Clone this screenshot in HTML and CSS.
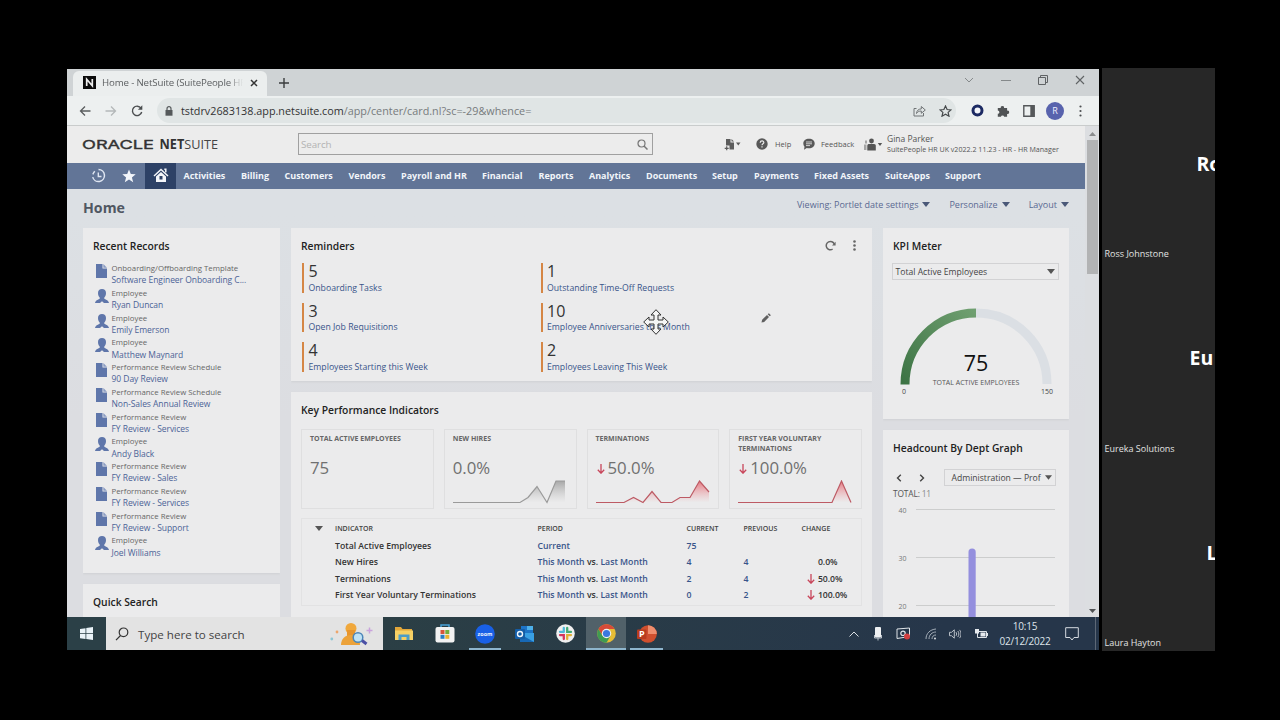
FILE: index.html
```html
<!DOCTYPE html>
<html lang="en">
<head>
<meta charset="utf-8">
<title>Home - NetSuite (SuitePeople HR)</title>
<link rel="stylesheet" href="styles.css">
</head>
<body>
<svg class="defs" width="0" height="0">
  <defs>
    <symbol id="doc" viewBox="0 0 11 14"><path d="M0 0h6.500v4.500H11V14H0z" fill="#5f76aa"/><path d="M7.300 0L11 3.700H7.300z" fill="#8a9bc2"/></symbol>
    <symbol id="person" viewBox="0 0 14 14"><path d="M7 0c2.500 0 4 1.600 4 3.900 0 1.900-.8 3.700-1.700 4.600v1.200c.9.900 4.200 1.200 4.700 4.300H9L7 12.300 5 14H0c.5-3.100 3.800-3.400 4.700-4.300V8.500C3.800 7.600 3 5.800 3 3.900 3 1.600 4.500 0 7 0z" fill="#5f76aa"/></symbol>
    <symbol id="down" viewBox="0 0 8 5"><path d="M0 0h8L4 5z" fill="currentColor"/></symbol>
    <symbol id="fall" viewBox="0 0 8 10"><path d="M4 0v9M.8 5.800L4 9.200l3.200-3.400" fill="none" stroke="#c8455a" stroke-width="1.300"/></symbol>
    <linearGradient id="gRed" x1="0" y1="0" x2="0" y2="1"><stop offset="0" stop-color="#e5626c" stop-opacity=".85"/><stop offset="1" stop-color="#ee9aa0" stop-opacity="0"/></linearGradient>
    <linearGradient id="gGray" x1="0" y1="0" x2="0" y2="1"><stop offset="0" stop-color="#a0a0a0" stop-opacity=".9"/><stop offset="1" stop-color="#c0c0c0" stop-opacity="0"/></linearGradient>
    <linearGradient id="gGreen" x1="0" y1="1" x2="1" y2="0"><stop offset="0" stop-color="#3c7344"/><stop offset="1" stop-color="#6f9f70"/></linearGradient>
  </defs>
</svg>

<div class="stage">
  <main class="desktop">
    <div class="tabstrip">
      <div class="tab">
        <svg width="13" height="13" viewBox="0 0 13 13"><rect width="13" height="13" fill="#0b0b0b"/><path d="M3.700 10V3.300L9.300 9.700V3" fill="none" stroke="#eee" stroke-width="1.700"/></svg>
        <span class="tab-title">Home - NetSuite (SuitePeople HR</span>
        <svg width="8" height="8" viewBox="0 0 8 8"><path d="M1 1l6 6M7 1L1 7" stroke="#333" stroke-width="1.500"/></svg>
      </div>
      <svg class="newtab" width="10" height="10" viewBox="0 0 10 10"><path d="M5 0v10M0 5h10" stroke="#3a3d3e" stroke-width="1.400"/></svg>
      <div class="winbtns">
        <svg width="10" height="10" viewBox="0 0 10 10"><path d="M1 3l4 4 4-4" fill="none" stroke="#85898b"/></svg>
        <svg width="10" height="10" viewBox="0 0 10 10"><path d="M0 5.500h10" stroke="#85898b"/></svg>
        <svg width="10" height="10" viewBox="0 0 10 10"><path d="M.5 2.500h7v7h-7zM2.500 2.500v-2h7v7h-2" fill="none" stroke="#606365" stroke-width="1"/></svg>
        <svg width="10" height="10" viewBox="0 0 10 10"><path d="M1 1l8 8M9 1L1 9" stroke="#606365" stroke-width="1.100"/></svg>
      </div>
    </div>

    <div class="toolbar">
      <div class="navbtns">
        <svg width="12" height="12" viewBox="0 0 12 12"><path d="M11.500 6H1.500M6 1.500L1.500 6 6 10.500" fill="none" stroke="#5a5d5f" stroke-width="1.300"/></svg>
        <svg width="12" height="12" viewBox="0 0 12 12"><path d="M.5 6h10M6 1.500L10.500 6 6 10.500" fill="none" stroke="#b4b8b9" stroke-width="1.300"/></svg>
        <svg width="12" height="12" viewBox="0 0 12 12"><path d="M10 3.200A4.700 4.700 0 1 0 10.700 7" fill="none" stroke="#4b4e50" stroke-width="1.400"/><path d="M11.300.3v4.400H6.900z" fill="#4b4e50"/></svg>
      </div>
      <div class="omnibox">
        <svg class="lock" width="8" height="10" viewBox="0 0 8 10"><path d="M.5 4h7v5.700h-7z" fill="#54585a"/><path d="M2 4V2.700a2 2 0 0 1 4 0V4" fill="none" stroke="#54585a" stroke-width="1.200"/></svg>
        <span class="url"><b>tstdrv2683138.app.netsuite.com</b>/app/center/card.nl?sc=-29&amp;whence=</span>
        <svg class="share" width="13" height="12" viewBox="0 0 13 12"><path d="M3.500 3.500H1v7.500h9.500V8" fill="none" stroke="#707476"/><path d="M3.500 8.500c.3-3 2-4.500 4.800-4.600V1.500L12.300 5 8.300 8.300V6c-2.300 0-3.700.8-4.800 2.500z" fill="none" stroke="#707476"/></svg>
        <svg width="13" height="12" viewBox="0 0 13 12"><path d="M6.500 1l1.600 3.500 3.900.4-2.900 2.500.9 3.800-3.500-2-3.500 2 .9-3.800L1 4.900l3.900-.4z" fill="none" stroke="#45494b" stroke-width="1.200"/></svg>
      </div>
      <div class="exts">
        <svg width="13" height="13" viewBox="0 0 13 13"><circle cx="6.500" cy="6.500" r="4.500" fill="#f3f5fa" stroke="#1c2a63" stroke-width="3"/></svg>
        <svg width="13" height="12" viewBox="0 0 13 12"><path d="M.8 3h3a1.700 1.700 0 1 1 3.300 0h3v2.700a1.700 1.700 0 1 1 0 3.300v2.700H7.200a1.700 1.700 0 0 0-3.300 0H.8V8.800a1.600 1.600 0 0 0 0-3.200z" fill="#505355"/></svg>
        <svg width="12" height="12" viewBox="0 0 12 12"><path d="M.8.800h10.400v10.400H.8z" fill="none" stroke="#55585a" stroke-width="1.400"/><path d="M7.300 1h4v10h-4z" fill="#55585a"/></svg>
        <span class="avatar">R</span>
        <svg width="3" height="12" viewBox="0 0 3 12"><circle cx="1.500" cy="1.500" r="1.100" fill="#4c4f51"/><circle cx="1.500" cy="6" r="1.100" fill="#4c4f51"/><circle cx="1.500" cy="10.500" r="1.100" fill="#4c4f51"/></svg>
      </div>
    </div>

    <div class="viewport">
      <div class="page">
        <header class="ns-header">
          <svg class="logo" width="140" height="16" viewBox="0 0 140 16">
            <text class="logo-oracle" x="0" y="12.500" textLength="72" lengthAdjust="spacingAndGlyphs">ORACLE</text>
            <text class="logo-ns" x="77.500" y="12.800" textLength="58.500" lengthAdjust="spacingAndGlyphs"><tspan class="logo-net">NET</tspan>SUITE</text>
          </svg>
          <div class="search"><span>Search</span>
            <svg width="11" height="11" viewBox="0 0 11 11"><circle cx="4.500" cy="4.500" r="3.500" fill="none" stroke="#777" stroke-width="1.200"/><path d="M7 7l3.500 3.500" stroke="#777" stroke-width="1.500"/></svg>
          </div>
          <div class="tools">
            <svg class="t-new" width="17" height="13" viewBox="0 0 17 13"><path d="M2 1h4.500v3.500H10V11.500H5.500V7.500H2z" fill="#5c5c5c"/><path d="M7.500 1L10 3.500H7.500z" fill="#5c5c5c"/><path d="M2.700 8.300v4M.7 10.300h4" stroke="#5c5c5c" stroke-width="1.200"/><path d="M12 4.500h4.500l-2.200 3z" fill="#5c5c5c"/></svg>
            <svg class="t-help" width="12" height="12" viewBox="0 0 12 12"><circle cx="6" cy="6" r="5.700" fill="#585858"/><path d="M4.200 4.700C4.300 2.300 8 2.500 7.800 4.600 7.700 5.700 6 5.800 6 7.200M6 8.200v1.400" fill="none" stroke="#ececec" stroke-width="1.200"/></svg>
            <span class="t-helptext">Help</span>
            <svg class="t-feed" width="12" height="12" viewBox="0 0 12 12"><path d="M6 .7c3.300 0 5.700 2 5.700 4.800S9.300 10.300 6 10.300c-.8 0-1.500-.1-2.200-.3L1 11.700l.5-3C.7 7.900.3 6.800.3 5.500.3 2.700 2.700.7 6 .7z" fill="#585858"/><path d="M3 4h6M3 5.800h6M3 7.600h4" stroke="#ececec" stroke-width=".8"/></svg>
            <span class="t-feedtext">Feedback</span>
            <svg class="t-role" width="20" height="13" viewBox="0 0 20 13"><path d="M1 12V6.500h2.500V12zM2 2.500h2v3H2z" fill="#a5a5a5"/><circle cx="8.500" cy="3" r="2.400" fill="#555"/><path d="M4.300 12.500V7.700C4.300 6.400 5 5.900 6 5.900h5c1.200 0 1.800.7 1.800 1.800v4.800z" fill="#555"/><path d="M14.800 5h4.400L17 8z" fill="#555"/></svg>
            <div class="user"><div class="user-name">Gina Parker</div><div class="user-role">SuitePeople HR UK v2022.2 11.23 - HR - HR Manager</div></div>
          </div>
        </header>

        <nav class="menu">
          <span class="mi"><svg width="15" height="15" viewBox="0 0 15 15"><path d="M7.500 1.500a6 6 0 1 1-5.800 7.600" fill="none" stroke="#dfe6f2" stroke-width="1.500"/><path d="M7.300 4.500v4h3.200M1.800 6.300l1-1.800 1-1.200" fill="none" stroke="#dfe6f2" stroke-width="1.400"/></svg></span>
          <span class="mi"><svg width="14" height="14" viewBox="0 0 14 14"><path d="M7 .5l1.800 4.600 4.900.2-3.800 3.100 1.300 4.800L7 10.500l-4.200 2.700 1.300-4.800L.3 5.300l4.900-.2z" fill="#f2f5fa"/></svg></span>
          <span class="mi on"><svg width="16" height="15" viewBox="0 0 16 15"><path d="M1 8l7-6.500L15 8M11.300 1.300h1.500v3" fill="none" stroke="#f4f6fa" stroke-width="1.500"/><path d="M3 8.600l5-4.600 5 4.600V14H3z" fill="#f4f6fa"/><path d="M6.500 8h3v3.500h-3z" fill="#2d4166"/></svg></span>
          <a>Activities</a><a>Billing</a><a>Customers</a><a>Vendors</a><a>Payroll and HR</a><a>Financial</a><a>Reports</a><a>Analytics</a><a>Documents</a><a>Setup</a><a>Payments</a><a>Fixed Assets</a><a>SuiteApps</a><a>Support</a>
        </nav>

        <div class="titlebar">
          <h1>Home</h1>
          <div class="opts">
            <span class="o1">Viewing: Portlet date settings</span><svg width="8" height="5"><use href="#down"/></svg>
            <span class="o2">Personalize</span><svg width="8" height="5"><use href="#down"/></svg>
            <span class="o3">Layout</span><svg width="8" height="5"><use href="#down"/></svg>
          </div>
        </div>

        <div class="columns">
          <div class="col">
            <section class="card recent">
              <h2>Recent Records</h2>
              <ul>
                <li><svg class="ic"><use href="#doc"/></svg><div><p>Onboarding/Offboarding Template</p><a>Software Engineer Onboarding C...</a></div></li>
                <li><svg class="ip"><use href="#person"/></svg><div><p>Employee</p><a>Ryan Duncan</a></div></li>
                <li><svg class="ip"><use href="#person"/></svg><div><p>Employee</p><a>Emily Emerson</a></div></li>
                <li><svg class="ip"><use href="#person"/></svg><div><p>Employee</p><a>Matthew Maynard</a></div></li>
                <li><svg class="ic"><use href="#doc"/></svg><div><p>Performance Review Schedule</p><a>90 Day Review</a></div></li>
                <li><svg class="ic"><use href="#doc"/></svg><div><p>Performance Review Schedule</p><a>Non-Sales Annual Review</a></div></li>
                <li><svg class="ic"><use href="#doc"/></svg><div><p>Performance Review</p><a>FY Review - Services</a></div></li>
                <li><svg class="ip"><use href="#person"/></svg><div><p>Employee</p><a>Andy Black</a></div></li>
                <li><svg class="ic"><use href="#doc"/></svg><div><p>Performance Review</p><a>FY Review - Sales</a></div></li>
                <li><svg class="ic"><use href="#doc"/></svg><div><p>Performance Review</p><a>FY Review - Services</a></div></li>
                <li><svg class="ic"><use href="#doc"/></svg><div><p>Performance Review</p><a>FY Review - Support</a></div></li>
                <li><svg class="ip"><use href="#person"/></svg><div><p>Employee</p><a>Joel Williams</a></div></li>
              </ul>
            </section>
            <section class="card rest"><h2>Quick Search</h2></section>
          </div>

          <div class="col">
            <section class="card reminders">
              <div class="head"><h2>Reminders</h2>
                <svg width="11" height="11" viewBox="0 0 11 11"><path d="M9.300 4A4.200 4.200 0 1 0 7.600 9.200" fill="none" stroke="#666" stroke-width="1.500"/><path d="M10.600 1.800v3.700H7z" fill="#666"/></svg>
                <svg width="3" height="11" viewBox="0 0 3 11"><circle cx="1.500" cy="1.500" r="1.300" fill="#666"/><circle cx="1.500" cy="5.500" r="1.300" fill="#666"/><circle cx="1.500" cy="9.500" r="1.300" fill="#666"/></svg>
              </div>
              <div class="remrow">
                <div class="remgrid">
                  <div class="rem"><b>5</b><a>Onboarding Tasks</a></div><div class="rem"><b>1</b><a>Outstanding Time-Off Requests</a></div>
                  <div class="rem"><b>3</b><a>Open Job Requisitions</a></div><div class="rem"><b>10</b><a>Employee Anniversaries this Month</a></div>
                  <div class="rem"><b>4</b><a>Employees Starting this Week</a></div><div class="rem"><b>2</b><a>Employees Leaving This Week</a></div>
                </div>
                <svg class="pencil" width="10" height="10" viewBox="0 0 10 10"><path d="M.5 9.500l.6-2.700L6 2l2 2-4.800 4.900zM6.700 1.300L7.900.200l2 2-1.200 1.100z" fill="#606060"/></svg>
              </div>
            </section>
            <section class="card kpi rest">
              <h2>Key Performance Indicators</h2>
              <div class="tiles">
                <div class="tile"><h3>TOTAL ACTIVE EMPLOYEES</h3><div class="val">75</div></div>
                <div class="tile"><h3>NEW HIRES</h3><div class="val">0.0%</div>
                  <svg width="114" height="24"><path d="M67 22.500l8-5 9-11 10 16 9-21.500h9v21.500z" fill="url(#gGray)"/><path d="M0 22.500h67l8-5 9-11 10 16 9-21.500h9" fill="none" stroke="#9a9a9a" stroke-width="1.200"/></svg></div>
                <div class="tile"><h3>TERMINATIONS</h3><div class="val"><svg width="8" height="10"><use href="#fall"/></svg>50.0%</div>
                  <svg width="114" height="24"><path d="M28 22.500l9.500-5 9.500 5 9-11 9 11h11l8-5h10L103.500 1l9.500 11v10.500z" fill="url(#gRed)"/><path d="M0 22.500h28l9.500-5 9.500 5 9-11 9 11h11l8-5h10L103.500 1l9.500 11" fill="none" stroke="#bd5a64" stroke-width="1.200"/></svg></div>
                <div class="tile"><h3>FIRST YEAR VOLUNTARY TERMINATIONS</h3><div class="val"><svg width="8" height="10"><use href="#fall"/></svg>100.0%</div>
                  <svg width="114" height="24"><path d="M94 22.500L103.500 1l9.500 21.500z" fill="url(#gRed)"/><path d="M0 22.500h94L103.500 1l9.500 21.500" fill="none" stroke="#bd5a64" stroke-width="1.200"/></svg></div>
              </div>
              <div class="table">
                <div class="tr th"><svg width="8" height="5"><use href="#down"/></svg><span>INDICATOR</span><span>PERIOD</span><span>CURRENT</span><span>PREVIOUS</span><span>CHANGE</span></div>
                <div class="tr"><i></i><span>Total Active Employees</span><a>Current</a><a>75</a><i></i><i></i></div>
                <div class="tr"><i></i><span>New Hires</span><span><a>This Month</a> vs. <a>Last Month</a></span><a>4</a><a>4</a><span class="chg">0.0%</span></div>
                <div class="tr"><i></i><span>Terminations</span><span><a>This Month</a> vs. <a>Last Month</a></span><a>2</a><a>4</a><span class="chg"><svg width="8" height="10"><use href="#fall"/></svg>50.0%</span></div>
                <div class="tr"><i></i><span>First Year Voluntary Terminations</span><span><a>This Month</a> vs. <a>Last Month</a></span><a>0</a><a>2</a><span class="chg"><svg width="8" height="10"><use href="#fall"/></svg>100.0%</span></div>
              </div>
            </section>
          </div>

          <div class="col">
            <section class="card meter">
              <h2>KPI Meter</h2>
              <div class="select"><span>Total Active Employees</span><svg width="8" height="5"><use href="#down"/></svg></div>
              <svg class="gauge" width="186" height="110" viewBox="0 0 186 110">
                <path d="M93 34a71 71 0 0 1 71 71" fill="none" stroke="#dbdfe4" stroke-width="9"/>
                <path d="M22 105.500a71 71.500 0 0 1 71-71.500" fill="none" stroke="url(#gGreen)" stroke-width="9"/>
                <text class="g-val" x="93" y="91.500">75</text>
                <text class="g-lab" x="93" y="105.500">TOTAL ACTIVE EMPLOYEES</text>
              </svg>
              <div class="ends"><span>0</span><span>150</span></div>
            </section>
            <section class="card head-graph rest">
              <h2>Headcount By Dept Graph</h2>
              <div class="pick">
                <svg width="6" height="8" viewBox="0 0 6 8"><path d="M4.800.7L1.500 4l3.300 3.300" fill="none" stroke="#444" stroke-width="1.400"/></svg>
                <svg width="6" height="8" viewBox="0 0 6 8"><path d="M1.200.7L4.500 4 1.200 7.300" fill="none" stroke="#444" stroke-width="1.400"/></svg>
                <div class="select"><span>Administration — Prof</span><svg width="7" height="5"><use href="#down"/></svg></div>
              </div>
              <div class="total">TOTAL: <span>11</span></div>
              <svg class="bars" width="186" height="120">
                <path d="M33 9.500h139M33 57.500h139M33 105.500h139" stroke="#cccdcd"/>
                <path d="M85.500 120V52a3.600 3.600 0 0 1 7.200 0V120z" fill="#948fde"/>
                <text class="ax" x="23.500" y="12.500">40</text><text class="ax" x="23.500" y="60.500">30</text><text class="ax" x="23.500" y="108.500">20</text>
              </svg>
            </section>
          </div>
        </div>
      </div>
      <div class="scroll">
        <svg width="7" height="4"><path d="M0 4L3.500 0 7 4z" fill="#8a8c8e"/></svg>
        <div class="thumb"></div>
        <svg width="7" height="4"><path d="M0 0h7L3.500 4z" fill="#505254"/></svg>
      </div>
      <svg class="cursor" width="26" height="26" viewBox="0 0 26 26"><path d="M13 .7l5 5.300h-3v5h5V8l5.300 5-5.300 5v-3h-5v5h3l-5 5.300L8 20h3v-5H6v3L.7 13 6 8v3h5V6H8z" fill="#f5f5f5" stroke="#333" stroke-width="1"/></svg>
    </div>

    <div class="taskbar">
      <div class="start"><svg width="13" height="13" viewBox="0 0 13 13"><path d="M0 2l5.500-.8v5H0zM6.300 1L13 0v6.200H6.300zM0 7h5.500v5L0 11.200zM6.300 7H13v6l-6.700-.9z" fill="#e9f3f8"/></svg></div>
      <div class="tsearch">
        <svg width="14" height="14" viewBox="0 0 14 14"><circle cx="8.500" cy="5.300" r="4.300" fill="none" stroke="#333" stroke-width="1.200"/><path d="M5.500 8.500L1 13.200" stroke="#333" stroke-width="1.200"/></svg>
        <span>Type here to search</span>
        <svg class="hl" width="44" height="24" viewBox="0 0 44 24"><circle cx="21" cy="6.500" r="5.500" fill="#f0a83c"/><path d="M17 8h8v6h-8z" fill="#e8962e"/><path d="M11 23c0-6 4-10 10-10s9 4 9 10z" fill="#eca23a"/><circle cx="28" cy="15.500" r="4.800" fill="#bfe2f5" stroke="#4c86b8" stroke-width="1.500"/><path d="M32 18.500l4.500 3.500" stroke="#4a4fa5" stroke-width="3"/><path d="M39.500 5.500v6M36.500 8.500h6" stroke="#c9a3dc" stroke-width="1.500"/><circle cx="7" cy="10" r="1.400" fill="#eda66c"/><circle cx="1.800" cy="17" r="1.400" fill="#8cc6d5"/></svg>
      </div>
      <div class="apps">
        <span class="app"><svg width="18" height="15" viewBox="0 0 18 15"><path d="M0 1h6l1.500 2H17v11H0z" fill="#e2a73a"/><path d="M0 4.500h18V14H0z" fill="#f6d064"/><path d="M3.500 14V8.500h11V14h-3v-3h-5v3z" fill="#4b9cc9"/></svg></span>
        <span class="app"><svg width="20" height="19" viewBox="0 0 20 19"><path d="M6 4V1h8v3" fill="none" stroke="#4aa3d8" stroke-width="1.500"/><rect x=".5" y="3" width="19" height="15.500" rx="2" fill="#f2f2f2"/><path d="M5.500 6h4v4h-4z" fill="#d8553a"/><path d="M10.300 6h4v4h-4z" fill="#74ae3c"/><path d="M5.500 10.800h4v4h-4z" fill="#2c7dc4"/><path d="M10.300 10.800h4v4h-4z" fill="#edb22f"/></svg></span>
        <span class="app run"><svg width="20" height="20" viewBox="0 0 20 20"><circle cx="10" cy="10" r="9.800" fill="#1960e6"/><text class="zm" x="10" y="11.700">zoom</text></svg></span>
        <span class="app"><svg width="20" height="18" viewBox="0 0 20 18"><path d="M6 1h12v8H6z" fill="#1d74c7"/><path d="M12 1h6v4h-6z" fill="#4db0ea"/><path d="M5 8h14v9H5z" fill="#39a0e4"/><path d="M5 9l14 8H5z" fill="#1768b5"/><rect y="4" width="10" height="10" rx="1" fill="#145da6"/><circle cx="5" cy="9" r="2.500" fill="none" stroke="#f0f6fa" stroke-width="1.400"/></svg></span>
        <span class="app"><svg width="19" height="19" viewBox="0 0 19 19"><circle cx="9.500" cy="9.500" r="9.300" fill="#f0f0f0"/><g fill="none" stroke-width="2.300" stroke-linecap="round"><path d="M7.800 4v4M4 7.800h3.800" stroke="#4fb8dc"/><path d="M11.200 4v3.900h3.800" stroke="#45ac78"/><path d="M11.200 15v-3.900H15" stroke="#e1af38"/><path d="M7.800 15v-3.900H4" stroke="#d4345f"/></g></svg></span>
        <span class="app active run"><svg width="19" height="19" viewBox="0 0 19 19"><circle cx="9.500" cy="9.500" r="9.300" fill="#e8bd35"/><path d="M1.400 4.900A9.300 9.300 0 0 1 17.600 4.900H9.500L5.500 11.800z" fill="#d84a38"/><path d="M1.400 4.900A9.300 9.300 0 0 0 9.500 18.800l4-7H5.500z" fill="#3f9b52"/><circle cx="9.500" cy="9.500" r="4.700" fill="#f2f2f2"/><circle cx="9.500" cy="9.500" r="3.600" fill="#3b78df"/></svg></span>
        <span class="app run"><svg width="20" height="18" viewBox="0 0 20 18"><circle cx="11" cy="9" r="8.800" fill="#cf4f2e"/><path d="M11 .2a8.800 8.800 0 0 1 8.800 8.800H11z" fill="#ee8d6d"/><rect y="4.500" width="9.500" height="9.500" rx="1" fill="#b93c1e"/><text class="pp" x="4.800" y="12.200">P</text></svg></span>
      </div>
      <div class="tray">
        <svg class="caret" width="10" height="6" viewBox="0 0 10 6"><path d="M.5 5.500L5 1l4.500 4.500" fill="none" stroke="#dbe0e5"/></svg>
        <svg width="8" height="14" viewBox="0 0 8 14"><rect x="1" y="0" width="6" height="10.500" rx="1" fill="#eef0f2"/><path d="M.5 8v3h7V8M4 11v2.500" fill="none" stroke="#bac2ca"/></svg>
        <svg width="15" height="13" viewBox="0 0 15 13"><path d="M1 2l12.500-1v8.500L1 11.500z" fill="none" stroke="#dfe4e8"/><circle cx="7" cy="6.300" r="2.200" fill="none" stroke="#e2e6ea" stroke-width="1.200"/><circle cx="11" cy="9.500" r="3" fill="#d33f3f"/></svg>
        <svg width="12" height="12" viewBox="0 0 12 12"><path d="M1 11C1 5.500 5 1.500 11 1M4 11c0-4 3-7 7-7M7 11c0-2.500 1.500-4 4-4" fill="none" stroke="#a3adb8"/><circle cx="10" cy="10.500" r="1" fill="#dce1e5"/></svg>
        <svg class="sound" width="12" height="10" viewBox="0 0 12 10"><path d="M.5 3.300h2L5.300.8v8.400L2.500 6.700h-2zM7 3.200c.8 1 .8 2.600 0 3.600M8.800 2c1.400 1.700 1.400 4.300 0 6M10.500.9c2 2.300 2 5.900 0 8.200" fill="none" stroke="#c7cdd4" stroke-width=".9"/></svg>
        <svg width="13" height="10" viewBox="0 0 13 10"><path d="M2.500 2.500h9v6h-9z" fill="none" stroke="#dfe4e8"/><path d="M5.500 3.500h5v4h-5zM0 0h4v4.500H0z" fill="#e6eaee"/><path d="M12.500 4v3" stroke="#dfe4e8"/></svg>
        <div class="clock"><div>10:15</div><div>02/12/2022</div></div>
        <svg class="note" width="14" height="14" viewBox="0 0 14 14"><path d="M.7.700h12.600v9.800H9L7 13l-2-2.500H.7z" fill="none" stroke="#d5dae0"/></svg>
      </div>
      <div class="peek"></div>
    </div>
  </main>

  <aside class="people">
    <div class="tilep"><b>Ro</b><span>Ross Johnstone</span></div>
    <div class="tilep p2"><b>Eu</b><span>Eureka Solutions</span></div>
    <div class="tilep p3"><b>L</b><span>Laura Hayton</span></div>
  </aside>
</div>
</body>
</html>
```
FILE: styles.css
```css
* { box-sizing: border-box; margin: 0; padding: 0; }
html, body { width: 1280px; height: 720px; overflow: hidden; background: #000; }
body { font-family: "Open Sans", "Noto Sans", sans-serif; font-size: 9px; color: #333; }
svg { display: block; flex: none; }
.defs { position: absolute; }
ul { list-style: none; }
i { font-style: normal; }
.stage { display: flex; align-items: flex-start; padding: 68px 65px 0 67px; width: 1280px; height: 720px; }
.desktop { width: 1032px; height: 581px; margin-top: 1px; display: flex; flex-direction: column; overflow: hidden; background: linear-gradient(#dce0e4 25%, #dcdde1 60%); }

.tabstrip { height: 27px; display: flex; align-items: center; background: #cfd3d5; padding-left: 6px; flex: none; }
.tab { width: 194px; height: 25px; align-self: flex-end; background: #ebeeee; border-radius: 6px 6px 0 0; display: flex; align-items: center; padding: 0 0 2px 10px; }
.tab-title { width: 141px; margin: 0 7px 0 6px; white-space: nowrap; overflow: hidden; font-size: 9.700px; line-height: 16px; letter-spacing: -.15px; color: #5c5f61; -webkit-mask-image: linear-gradient(90deg, #000 90%, transparent); mask-image: linear-gradient(90deg, #000 90%, transparent); }
.newtab { margin-left: 12px; }
.winbtns { margin: -5px 14px 0 auto; display: flex; gap: 27px; }

.toolbar { height: 30px; flex: none; display: flex; align-items: center; background: #edf0f0; border-bottom: 1px solid #c9cccc; }
.navbtns { display: flex; gap: 14px; padding-left: 12px; width: 90px; }
.omnibox { width: 799px; height: 25px; border-radius: 13px; background: #e0e5e5; display: flex; align-items: center; padding: 0 4px 0 8px; }
.url { font-size: 10.800px; line-height: 20px; letter-spacing: 0; color: #777b7d; margin-left: 8px; white-space: nowrap; }
.url b { font-weight: 400; color: #333; }
.share { margin: 0 13px 0 auto; }
.exts { display: flex; align-items: center; gap: 13px; padding-left: 15px; }
.avatar { width: 18px; height: 18px; border-radius: 50%; background: #5863ad; color: #eef; text-align: center; font-size: 9px; line-height: 18px; }
.exts .avatar { margin: 0 2px 0 -2px; }

.viewport { height: 491px; flex: none; display: flex; position: relative; }
.page { width: 1018px; height: 491px; overflow: hidden; }
.ns-header { height: 37px; background: #ececec; display: flex; align-items: center; padding-left: 15px; }
.logo { margin-top: -1px; }
.logo-oracle { font: 400 12px Inter, sans-serif; fill: #333; stroke: #333; stroke-width: .35; }
.logo-ns { font: 400 13.500px "Open Sans", sans-serif; fill: #444; }
.logo-net { font-weight: 700; fill: #333; }
.search { width: 355px; height: 22px; margin: -1px 0 0 76px; border: 1px solid #a0a0a0; display: flex; align-items: center; justify-content: space-between; padding: 0 4px 0 2px; font-size: 9.800px; color: #b3b3b3; letter-spacing: -.1px; }
.tools { display: flex; align-items: center; margin-left: 71px; margin-top: -1px; font-size: 7.500px; color: #555; }
.t-help { margin-left: 15px; } .t-helptext { width: 28px; margin-left: 7px; }
.t-feedtext { width: 32px; margin-left: 6px; }
.t-role { margin-left: 10px; }
.user { margin-left: 4px; white-space: nowrap; line-height: 11px; }
.user-name { font-size: 8.500px; color: #555; }
.user-role { font-size: 7.100px; color: #555; }

.menu { height: 26px; background: #627597; display: grid; align-items: center; padding-left: 16px; grid-template-columns: 30px 32px 38.500px 57.500px 43.500px 64px 52.500px 81px 56.500px 50.500px 57px 66px 42px 60px 71px 60px 1fr; }
.menu a { font-size: 9px; font-weight: 700; color: #f2f5fa; white-space: nowrap; margin-top: -2px; }
.mi { height: 26px; width: 31px; display: flex; align-items: center; justify-content: center; padding-bottom: 1px; }
.mi.on { background: #2d4166; }

.titlebar { height: 39px; display: flex; align-items: center; padding: 0 16px; }
h1 { font-size: 14.200px; line-height: 20px; margin-top: -1px; color: #505762; }
.opts { margin: -8px 0 0 auto; display: flex; align-items: center; color: #5a6992; font-size: 9px; white-space: nowrap; }
.opts svg { margin-left: 4px; color: #4a5878; } .opts .o2, .opts .o3 { margin-left: 19px; }

.columns { display: grid; grid-template-columns: 197px 581px 186px; gap: 11px; padding-left: 16px; height: 389px; }
.col { display: flex; flex-direction: column; gap: 11px; height: 389px; overflow: hidden; }
.card { background: #ebebec; padding: 0 10px; box-shadow: 0 1px 2px #cfd1d4; flex: none; }
.card.rest { flex: 1 1 0; overflow: hidden; }
h2 { font-size: 10.300px; font-weight: 600; line-height: 36px; height: 34px; color: #222; white-space: nowrap; }
.card a { color: #38548a; }

.recent { height: 345px; }
.recent li { height: 24.750px; display: flex; font-size: 8.500px; line-height: 12.300px; white-space: nowrap; }
.recent p { font-size: 7.800px; color: #666; }
.card.recent a { display: block; font-size: 8.500px; letter-spacing: -.05px; color: #4c6397; }
.ic { width: 11px; height: 14px; margin: 2px 5px 0 2.500px; } .ip { width: 14px; height: 14px; margin: 2px 3px 0 1.500px; }

.reminders { height: 153px; }
.head { display: flex; align-items: center; }
.head h2 { flex: 1; } .head svg { margin-right: 17px; } .head svg:last-child { margin-right: 6px; }
.remrow { display: flex; align-items: center; padding: 1px 0 0 1px; }
.remgrid { display: grid; grid-template-columns: 238.500px 220px; grid-auto-rows: 29.500px; row-gap: 10px; }
.rem { border-left: 2px solid #d58645; padding-left: 4.500px; white-space: nowrap; }
.rem b { display: block; font-weight: 500; font-size: 16px; line-height: 17.500px; color: #333; }
.rem a { display: block; font-size: 8.700px; line-height: 14.500px; font-weight: 500; }
.pencil { margin-top: 2px; }

.kpi h2 { height: 37px; }
.tiles { display: grid; grid-template-columns: repeat(4, 1fr); gap: 10px; }
.tile { height: 80px; border: 1px solid #dfdfe0; padding: 4px 0 0 8px; }
h3 { font-size: 7px; font-weight: 700; line-height: 9.500px; height: 22px; color: #666; padding-right: 20px; white-space: normal; letter-spacing: 0; }
.tile .val { display: flex; align-items: center; height: 24px; font-size: 16.800px; line-height: 24px; color: #707070; }
.val svg { margin: 2px 3px 0 1px; }
.table { height: 88px; margin-top: 9px; border: 1px solid #e2e2e3; }
.tr { display: grid; grid-template-columns: 33px 202.500px 149px 57px 58px 1fr; height: 16.400px; align-items: center; font-size: 8.700px; font-weight: 600; white-space: nowrap; color: #333; }
.th { height: 18.700px; font-size: 7px; color: #444; } .th svg { margin-left: 12.500px; color: #555; }
.chg { padding-left: 16.500px; display: flex; align-items: center; color: #333; letter-spacing: -.1px; }
.chg svg { margin: 0 3px 0 -11px; }

.meter { height: 191px; }
.select { height: 17px; border: 1px solid #d2d2d4; display: flex; align-items: center; justify-content: space-between; color: #444; font-size: 8.600px; font-weight: 500; padding: 0 3px 0 2.500px; white-space: nowrap; }
.select svg { color: #555; }
.meter .select { margin: 1px 0 0 -1px; }
.gauge { margin-left: -10px; margin-top: -1px; height: 110px; }
.g-val { font-size: 21.500px; fill: #111; text-anchor: middle; }
.g-lab { font-size: 7px; font-weight: 500; fill: #555; text-anchor: middle; }
.ends { display: flex; justify-content: space-between; padding: 0 6px 0 9px; font-size: 7px; line-height: 8px; color: #444; margin-top: -1px; }
.pick { display: flex; align-items: center; padding: 0 3px; margin-top: 5px; }
.pick svg + svg { margin-left: 17px; }
.pick .select { width: 112px; margin-left: 19px; padding-left: 6.500px; }
.total { font-size: 8.400px; line-height: 15px; height: 16.500px; letter-spacing: -.15px; color: #555; } .total span { color: #888; }
.bars { margin-left: -10px; margin-top: -3px; }
.ax { font-size: 7px; fill: #777; text-anchor: end; }

.scroll { width: 14px; background: #dcdee1; display: flex; flex-direction: column; align-items: center; padding: 6px 0 4px; }
.thumb { width: 11px; height: 134px; background: #b2b3b4; margin: 4px 0 auto; }
.cursor { position: absolute; left: 576px; top: 183px; }

.taskbar { height: 33px; flex: none; display: flex; background: linear-gradient(90deg, #2b3f45 30%, #26364a 85%); }
.start { width: 39px; background: #2b4047; display: flex; align-items: center; justify-content: center; }
.tsearch { width: 277px; background: #e3e3e3; display: flex; align-items: center; padding-left: 9px; font-size: 11.600px; color: #444; }
.tsearch span { margin: 2px 0 0 9px; } .hl { margin: 0 9px 0 auto; }
.apps { display: flex; padding-left: 1px; }
.app { width: 40.400px; height: 33px; display: flex; align-items: center; justify-content: center; position: relative; }
.app.active { background: #516169; }
.app.run::after { content: ""; position: absolute; bottom: 0; left: 4px; right: 4px; height: 2px; background: #8eb5cd; }
.app.active::after { left: 0; right: 0; }
.zm { font-size: 5.500px; font-weight: 700; fill: #e8effc; text-anchor: middle; }
.pp { font-size: 9px; font-weight: 700; fill: #fff; text-anchor: middle; }
.tray { margin-left: auto; padding-right: 16px; display: flex; align-items: center; gap: 14px; }
.caret { margin-right: 1px; }
.sound { margin-left: -2px; }
.clock { width: 54px; text-align: center; font-size: 10px; line-height: 15px; letter-spacing: -.2px; color: #dfe5ea; margin: 0 -1px 0 -4px; }
.peek { width: 4px; border-left: 1px solid #5d6876; }

.people { width: 113px; height: 583px; margin-left: 3px; background: #272727; overflow: hidden; display: flex; flex-direction: column; }
.tilep { height: 194.500px; display: flex; flex-direction: column; justify-content: space-between; padding: 82px 0 2px 2.500px; white-space: nowrap; }
.tilep b { font-size: 19.500px; line-height: 28px; font-weight: 700; color: #fff; margin-left: 92px; }
.p2 b { margin-left: 85px; } .p3 b { margin-left: 102px; }
.tilep span { font-size: 9px; line-height: 13px; color: #e3e3e3; }
```
